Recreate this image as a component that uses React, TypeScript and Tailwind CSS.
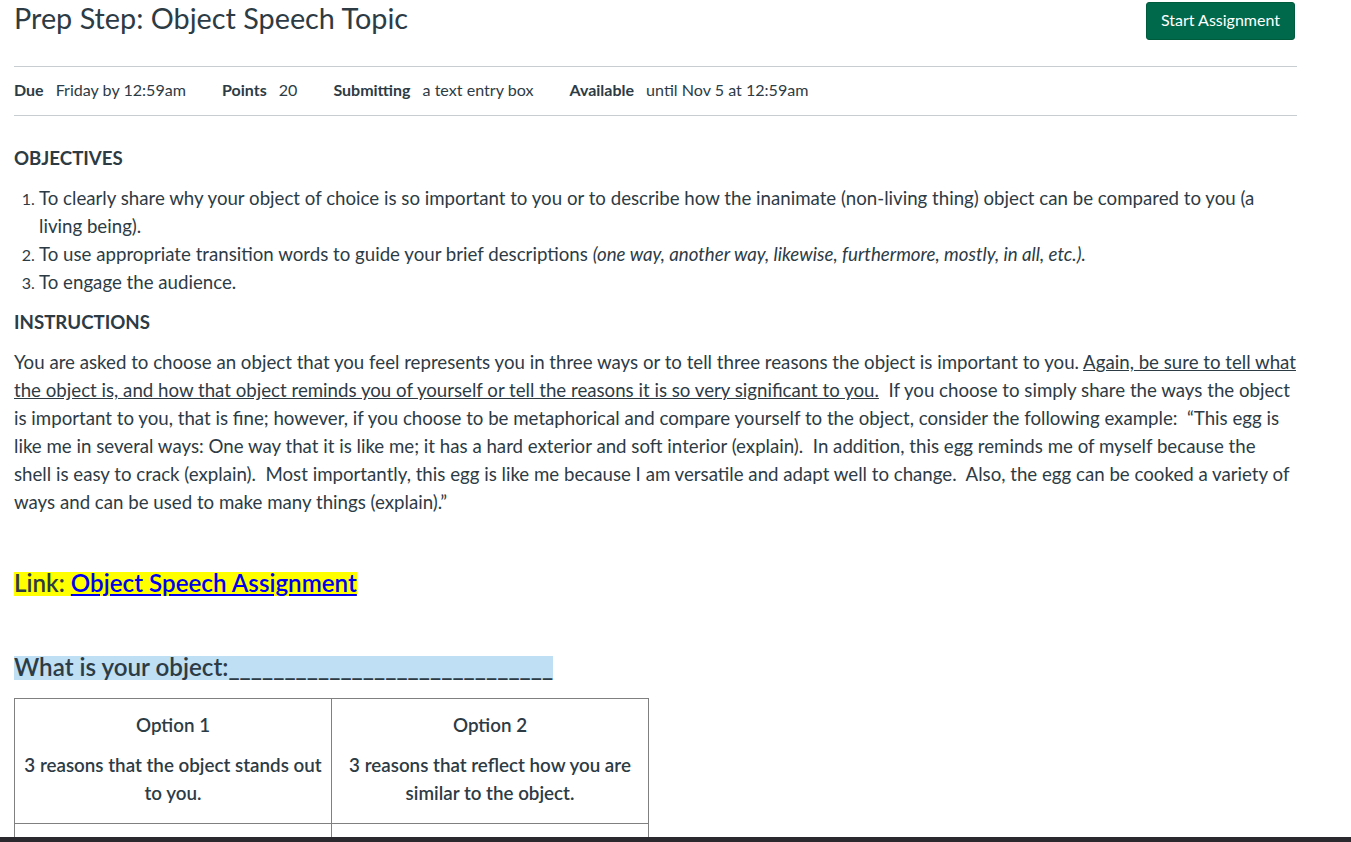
export default function App() {
  return (
    <div className="relative h-[842px] w-[1351px] overflow-hidden bg-white font-['Lato',sans-serif] text-[18.68px] leading-[28px] text-[#2d3b45]">
      <div className="ml-[14px] w-[1283px]">
        <div className="flex h-[67px] items-start justify-between border-b border-[#c7cdd1]">
          <h1 className="text-[28.8px] leading-[36px] font-normal">Prep Step: Object Speech Topic</h1>
          <button className="mt-[2px] mr-[2px] h-[38px] w-[149px] rounded-[3px] border border-[#005a3c] bg-[#00694b] pb-[2px] text-center text-[16px] leading-[34px] text-white">Start Assignment</button>
        </div>
        <div className="flex h-[49px] items-center border-b border-[#c7cdd1] pb-[2px] text-[16.1px] leading-[24px]">
          <span className="text-[16px] font-bold">Due</span><span className="ml-3 mr-[36px]">Friday by 12:59am</span>
          <span className="text-[16px] font-bold">Points</span><span className="ml-3 mr-[36px]">20</span>
          <span className="text-[16px] font-bold">Submitting</span><span className="ml-3 mr-[36px]">a text entry box</span>
          <span className="text-[16px] font-bold">Available</span><span className="ml-3">until Nov 5 at 12:59am</span>
        </div>
        <h2 className="mt-[28px] text-[18.68px] leading-[28px] font-bold">OBJECTIVES</h2>
        <ol className="mt-[12px] list-decimal pl-[25px] font-normal marker:text-[16px]">
          <li>To clearly share why your object of choice is so important to you or to describe how the inanimate (non-living thing) object can be compared to you (a living being).</li>
          <li>To use appropriate transition words to guide your brief descriptions <em>(one way, another way, likewise, furthermore, mostly, in all, etc.).</em></li>
          <li>To engage the audience.</li>
        </ol>
        <h2 className="mt-[12px] font-bold">INSTRUCTIONS</h2>
        <p className="mt-[12px] w-[1282px]">
          You are asked to choose an object that you feel represents you in three ways or to tell three reasons the object is important to you. <u>Again, be sure to tell what the object is, and how that object reminds you of yourself or tell the reasons it is so very significant to you.</u>&nbsp; If you choose to simply share the ways the object is important to you, that is fine; however, if you choose to be metaphorical and compare yourself to the object, consider the following example:&nbsp; “This egg is like me in several ways: One way that it is like me; it has a hard exterior and soft interior (explain).&nbsp; In addition, this egg reminds me of myself because the shell is easy to crack (explain).&nbsp; Most importantly, this egg is like me because I am versatile and adapt well to change.&nbsp; Also, the egg can be cooked a variety of ways and can be used to make many things (explain).”
        </p>
        <p className="mt-[49px] text-[24.2px] leading-[36px] font-semibold">
          <span className="inline-block h-[24px] bg-[#ffff00] leading-[22px]">Link: <a href="#" className="text-[#0000ee] underline">Object Speech Assignment</a></span>
        </p>
        <p className="mt-[48px] text-[24.2px] leading-[36px] font-semibold">
          <span className="inline-block h-[24px] bg-[#bfdff5] leading-[22px]">What is your object:_____________________________</span>
        </p>
        <table className="mt-[13px] w-[635px] table-fixed border-collapse text-center text-[18.8px] font-semibold">
          <tbody>
            <tr>
              <td className="border border-[#808080] px-[6px] pt-[12px] pb-[16px]">
                <p>Option 1</p>
                <p className="mt-[12px]">3 reasons that the object stands out to you.</p>
              </td>
              <td className="border border-[#808080] px-[6px] pt-[12px] pb-[16px]">
                <p>Option 2</p>
                <p className="mt-[12px]">3 reasons that reflect how you are similar to the object.</p>
              </td>
            </tr>
            <tr className="h-[60px]">
              <td className="border border-[#808080]"></td>
              <td className="border border-[#808080]"></td>
            </tr>
          </tbody>
        </table>
      </div>
      <div className="absolute inset-x-0 bottom-0 h-[5px] bg-[#2a2a2e]"></div>
    </div>
  );
}
